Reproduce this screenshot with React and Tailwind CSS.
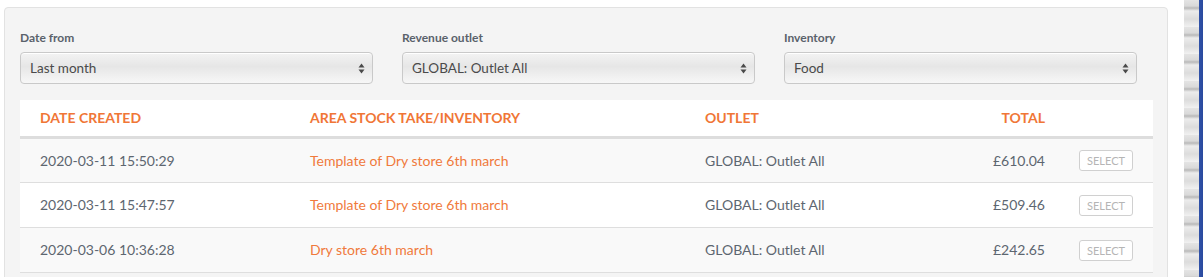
import { useState } from 'react';

const rows = [
    { date: '2020-03-11 15:50:29', name: 'Template of Dry store 6th march', outlet: 'GLOBAL: Outlet All', total: '£610.04' },
    { date: '2020-03-11 15:47:57', name: 'Template of Dry store 6th march', outlet: 'GLOBAL: Outlet All', total: '£509.46' },
    { date: '2020-03-06 10:36:28', name: 'Dry store 6th march', outlet: 'GLOBAL: Outlet All', total: '£242.65' },
];

function Arrows() {
    return (
        <svg width="7" height="11" viewBox="0 0 7 11" className="shrink-0">
            <path d="M3.5 0.5 L6.5 4.5 L0.5 4.5 Z" fill="#4a4a4a" />
            <path d="M3.5 10.5 L6.5 6.5 L0.5 6.5 Z" fill="#4a4a4a" />
        </svg>
    );
}

function FilterSelect({ label, value }) {
    return (
        <div className="w-[353px] shrink-0">
            <label className="block text-[12px] leading-4 font-bold text-[#5a626b] mb-[6px]">{label}</label>
            <div className="h-8 flex items-center justify-between pl-[9px] pr-[7px] rounded-[4px] border border-[#c9c9c9] bg-[linear-gradient(to_bottom,#f3f3f3,#e6e6e6_45%,#f7f7f7)] shadow-[inset_0_1px_0_#fff]">
                <span className="text-[13.5px] text-[#4a4a4a]">{value}</span>
                <Arrows />
            </div>
        </div>
    );
}

export default function App() {
    const [filters] = useState({ date: 'Last month', outlet: 'GLOBAL: Outlet All', inventory: 'Food' });

    return (
        <div className="w-[1203px] h-[277px] overflow-hidden bg-white flex font-['Lato','Open_Sans',sans-serif]">
            <div className="w-[1184px] shrink-0 pl-[4px] pt-[7px] pr-[16px]">
                <div className="h-[300px] rounded-[4px] border border-[#e2e2e2] bg-[#f4f4f4] pl-[15px] pr-[14px] pt-[22px]">
                    <div className="flex gap-[29px]">
                        <FilterSelect label="Date from" value={filters.date} />
                        <FilterSelect label="Revenue outlet" value={filters.outlet} />
                        <FilterSelect label="Inventory" value={filters.inventory} />
                    </div>

                    <table className="mt-4 w-full table-fixed border-collapse">
                        <colgroup>
                            <col className="w-[270px]" />
                            <col className="w-[395px]" />
                            <col className="w-[250px]" />
                            <col className="w-[124px]" />
                            <col className="w-[94px]" />
                        </colgroup>
                        <thead>
                            <tr className="bg-white h-[37px] border-b-[3px] border-[#dddddd] text-[14px] font-bold text-[#f07636] uppercase">
                                <th className="text-left font-bold pl-5">Date created</th>
                                <th className="text-left font-bold pl-5">Area stock take/inventory</th>
                                <th className="text-left font-bold pl-5">Outlet</th>
                                <th className="text-right font-bold pr-[14px]">Total</th>
                                <th></th>
                            </tr>
                        </thead>
                        <tbody>
                            {rows.map((r, i) => (
                                <tr key={i} className={`h-[45px] border-b border-[#dedede] text-[14px] text-[#5d6670] ${i % 2 === 0 ? 'bg-[#f9f9f9]' : 'bg-white'}`}>
                                    <td className="pl-5">{r.date}</td>
                                    <td className="pl-5 text-[#f07a3c]">{r.name}</td>
                                    <td className="pl-5">{r.outlet}</td>
                                    <td className="text-right pr-[14px]">{r.total}</td>
                                    <td className="pl-5">
                                        <button className="w-[54px] h-[21px] rounded-[3px] border border-[#d0d0d0] bg-white text-[11px] text-[#b5b5b5] uppercase leading-none">Select</button>
                                    </td>
                                </tr>
                            ))}
                        </tbody>
                    </table>
                </div>
            </div>
            <div className="w-[15px] shrink-0 bg-[repeating-linear-gradient(to_bottom,#e4e4e4_0px,#d9d9d9_6px,#b9b9b9_8px,#ececec_11px,#dcdcdc_19px,#f1f1f1_27px)]"></div>
            <div className="flex-1 bg-[linear-gradient(to_right,#3052a8,#2a4a9e)]"></div>
        </div>
    );
}
